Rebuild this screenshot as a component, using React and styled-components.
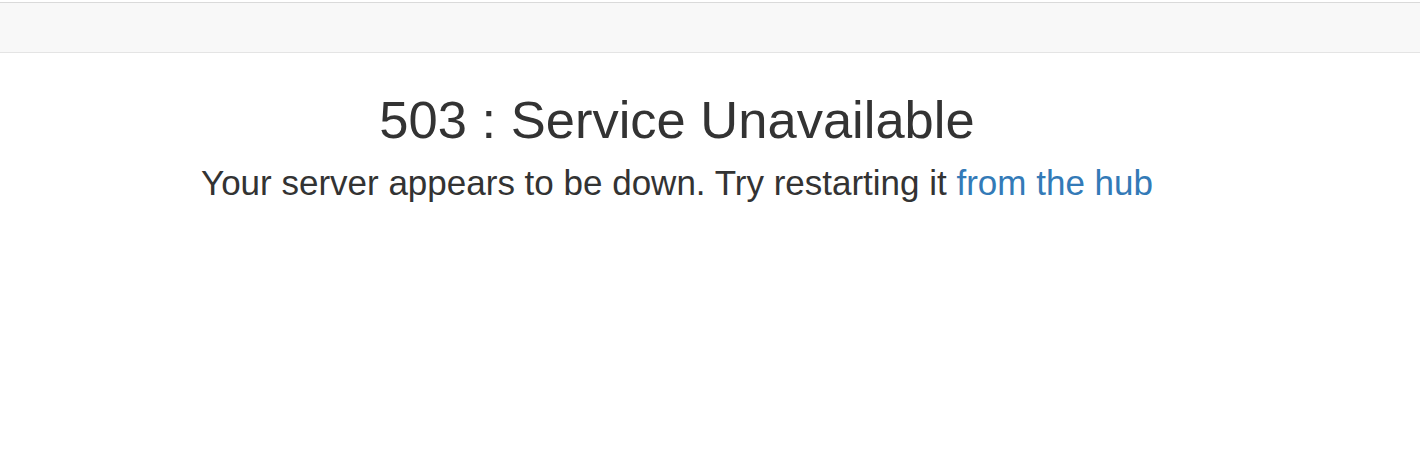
import React from 'react'
import styled, { createGlobalStyle } from 'styled-components'

const GlobalStyle = createGlobalStyle`
	html, body {
		margin: 0;
		padding: 0;
		background: #fff;
	}
	body {
		padding-top: 2px;
		font-family: "Liberation Sans", Arial, Helvetica, sans-serif;
		color: #333;
	}
`

const Navbar = styled.nav`
	height: 49px;
	background-color: #f8f8f8;
	border-top: 1px solid #dadada;
	border-bottom: 1px solid #e4e4e4;
`

const Main = styled.main`
	padding-right: 66px;
	text-align: center;
`

const Title = styled.h1`
	margin: 38px 0 0;
	font-size: 52.5px;
	font-weight: 400;
	line-height: 1.1;
	color: #333;
`

const Message = styled.p`
	margin: 9px 0 0;
	font-size: 35px;
	line-height: 50px;
	color: #333;
	a {
		color: #337ab7;
		text-decoration: none;
	}
`

export default () => {
	return (
		<>
			<GlobalStyle />
			<Navbar />
			<Main>
				<Title>503 : Service Unavailable</Title>
				<Message>
					Your server appears to be down. Try restarting it <a href="#">from the hub</a>
				</Message>
			</Main>
		</>
	)
}
